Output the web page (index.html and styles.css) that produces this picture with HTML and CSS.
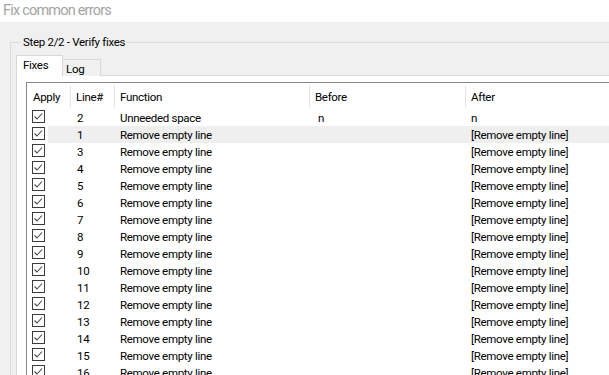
FILE: index.html
```html
<!DOCTYPE html>
<html lang="en">

<head>
    <meta charset="UTF-8">
    <title>Fix common errors</title>
    <link rel="stylesheet" href="styles.css">
</head>

<body>
    <!-- Window title -->
    <div class="title">Fix common errors</div>

    <fieldset class="group">
        <legend>Step 2/2 - Verify fixes</legend>

        <!-- Tabs -->
        <div class="tabs">
            <div class="tab active">Fixes</div>
            <div class="tab">Log</div>
        </div>

        <div class="tab-page">
            <div class="list">
                <div class="list-head">
                    <div class="col-apply">Apply</div>
                    <div class="col-line">Line#</div>
                    <div class="col-func">Function</div>
                    <div class="col-before">Before</div>
                    <div class="col-after">After</div>
                </div>

                <div class="row">
                    <div class="col-apply"><svg class="cb" viewBox="0 0 13 13"><rect x=".5" y=".5" width="12" height="12"/><path d="M2.5 6.5l2.5 2.5 5-5.5"/></svg></div>
                    <div class="col-line">2</div>
                    <div class="col-func">Unneeded space</div>
                    <div class="col-before">n</div>
                    <div class="col-after">n</div>
                </div>
                <div class="row hover">
                    <div class="col-apply"><svg class="cb" viewBox="0 0 13 13"><rect x=".5" y=".5" width="12" height="12"/><path d="M2.5 6.5l2.5 2.5 5-5.5"/></svg></div>
                    <div class="col-line">1</div>
                    <div class="col-func">Remove empty line</div>
                    <div class="col-before"></div>
                    <div class="col-after">[Remove empty line]</div>
                </div>
                <div class="row">
                    <div class="col-apply"><svg class="cb" viewBox="0 0 13 13"><rect x=".5" y=".5" width="12" height="12"/><path d="M2.5 6.5l2.5 2.5 5-5.5"/></svg></div>
                    <div class="col-line">3</div>
                    <div class="col-func">Remove empty line</div>
                    <div class="col-before"></div>
                    <div class="col-after">[Remove empty line]</div>
                </div>
                <div class="row">
                    <div class="col-apply"><svg class="cb" viewBox="0 0 13 13"><rect x=".5" y=".5" width="12" height="12"/><path d="M2.5 6.5l2.5 2.5 5-5.5"/></svg></div>
                    <div class="col-line">4</div>
                    <div class="col-func">Remove empty line</div>
                    <div class="col-before"></div>
                    <div class="col-after">[Remove empty line]</div>
                </div>
                <div class="row">
                    <div class="col-apply"><svg class="cb" viewBox="0 0 13 13"><rect x=".5" y=".5" width="12" height="12"/><path d="M2.5 6.5l2.5 2.5 5-5.5"/></svg></div>
                    <div class="col-line">5</div>
                    <div class="col-func">Remove empty line</div>
                    <div class="col-before"></div>
                    <div class="col-after">[Remove empty line]</div>
                </div>
                <div class="row">
                    <div class="col-apply"><svg class="cb" viewBox="0 0 13 13"><rect x=".5" y=".5" width="12" height="12"/><path d="M2.5 6.5l2.5 2.5 5-5.5"/></svg></div>
                    <div class="col-line">6</div>
                    <div class="col-func">Remove empty line</div>
                    <div class="col-before"></div>
                    <div class="col-after">[Remove empty line]</div>
                </div>
                <div class="row">
                    <div class="col-apply"><svg class="cb" viewBox="0 0 13 13"><rect x=".5" y=".5" width="12" height="12"/><path d="M2.5 6.5l2.5 2.5 5-5.5"/></svg></div>
                    <div class="col-line">7</div>
                    <div class="col-func">Remove empty line</div>
                    <div class="col-before"></div>
                    <div class="col-after">[Remove empty line]</div>
                </div>
                <div class="row">
                    <div class="col-apply"><svg class="cb" viewBox="0 0 13 13"><rect x=".5" y=".5" width="12" height="12"/><path d="M2.5 6.5l2.5 2.5 5-5.5"/></svg></div>
                    <div class="col-line">8</div>
                    <div class="col-func">Remove empty line</div>
                    <div class="col-before"></div>
                    <div class="col-after">[Remove empty line]</div>
                </div>
                <div class="row">
                    <div class="col-apply"><svg class="cb" viewBox="0 0 13 13"><rect x=".5" y=".5" width="12" height="12"/><path d="M2.5 6.5l2.5 2.5 5-5.5"/></svg></div>
                    <div class="col-line">9</div>
                    <div class="col-func">Remove empty line</div>
                    <div class="col-before"></div>
                    <div class="col-after">[Remove empty line]</div>
                </div>
                <div class="row">
                    <div class="col-apply"><svg class="cb" viewBox="0 0 13 13"><rect x=".5" y=".5" width="12" height="12"/><path d="M2.5 6.5l2.5 2.5 5-5.5"/></svg></div>
                    <div class="col-line">10</div>
                    <div class="col-func">Remove empty line</div>
                    <div class="col-before"></div>
                    <div class="col-after">[Remove empty line]</div>
                </div>
                <div class="row">
                    <div class="col-apply"><svg class="cb" viewBox="0 0 13 13"><rect x=".5" y=".5" width="12" height="12"/><path d="M2.5 6.5l2.5 2.5 5-5.5"/></svg></div>
                    <div class="col-line">11</div>
                    <div class="col-func">Remove empty line</div>
                    <div class="col-before"></div>
                    <div class="col-after">[Remove empty line]</div>
                </div>
                <div class="row">
                    <div class="col-apply"><svg class="cb" viewBox="0 0 13 13"><rect x=".5" y=".5" width="12" height="12"/><path d="M2.5 6.5l2.5 2.5 5-5.5"/></svg></div>
                    <div class="col-line">12</div>
                    <div class="col-func">Remove empty line</div>
                    <div class="col-before"></div>
                    <div class="col-after">[Remove empty line]</div>
                </div>
                <div class="row">
                    <div class="col-apply"><svg class="cb" viewBox="0 0 13 13"><rect x=".5" y=".5" width="12" height="12"/><path d="M2.5 6.5l2.5 2.5 5-5.5"/></svg></div>
                    <div class="col-line">13</div>
                    <div class="col-func">Remove empty line</div>
                    <div class="col-before"></div>
                    <div class="col-after">[Remove empty line]</div>
                </div>
                <div class="row">
                    <div class="col-apply"><svg class="cb" viewBox="0 0 13 13"><rect x=".5" y=".5" width="12" height="12"/><path d="M2.5 6.5l2.5 2.5 5-5.5"/></svg></div>
                    <div class="col-line">14</div>
                    <div class="col-func">Remove empty line</div>
                    <div class="col-before"></div>
                    <div class="col-after">[Remove empty line]</div>
                </div>
                <div class="row">
                    <div class="col-apply"><svg class="cb" viewBox="0 0 13 13"><rect x=".5" y=".5" width="12" height="12"/><path d="M2.5 6.5l2.5 2.5 5-5.5"/></svg></div>
                    <div class="col-line">15</div>
                    <div class="col-func">Remove empty line</div>
                    <div class="col-before"></div>
                    <div class="col-after">[Remove empty line]</div>
                </div>
                <div class="row">
                    <div class="col-apply"><svg class="cb" viewBox="0 0 13 13"><rect x=".5" y=".5" width="12" height="12"/><path d="M2.5 6.5l2.5 2.5 5-5.5"/></svg></div>
                    <div class="col-line">16</div>
                    <div class="col-func">Remove empty line</div>
                    <div class="col-before"></div>
                    <div class="col-after">[Remove empty line]</div>
                </div>
            </div>
        </div>
    </fieldset>
</body>

</html>
```

FILE: styles.css
```css
/* General */
body {
    margin: 0;
    background-color: #f0f0f0;
    font-family: 'Roboto', 'Liberation Sans', sans-serif;
    font-size: 11.5px;
    letter-spacing: -0.3px;
    color: #000;
    overflow: hidden;
    height: 375px;
}

/* Window title */
.title {
    height: 22px;
    background-color: #fff;
    color: #a3a3a3;
    font-size: 14.5px;
    letter-spacing: -0.8px;
    line-height: 22px;
    padding-left: 3px;
}

/* Group box */
.group {
    margin: 13px -20px 0 10px;
    padding: 5px 0 0 5px;
    border: 1px solid #dcdcdc;
    border-right: none;
    border-bottom: none;
    min-width: 0;
}

.group legend {
    padding: 0 2px;
    margin-left: 5px;
    line-height: 15px;
}

/* Tabs */
.tabs {
    display: flex;
    align-items: flex-end;
    height: 21px;
    position: relative;
    z-index: 1;
    margin-bottom: -1px;
}

.tab {
    height: 14px;
    padding: 2px 0 0 3px;
    line-height: 14px;
    width: 34px;
    border: 1px solid #d9d9d9;
    border-bottom: none;
    border-left: none;
    background-color: #f0f0f0;
}

.tab.active {
    height: 19px;
    padding: 1px 0 0 6px;
    line-height: 16px;
    width: 39px;
    border-left: 1px solid #d9d9d9;
    background-color: #fff;
}

.tab-page {
    background-color: #fff;
    border: 1px solid #d9d9d9;
    border-right: none;
    padding: 6px 0 0 9px;
    height: 400px;
}

/* List view */
.list {
    border: 1px solid #828790;
    border-right: none;
    background-color: #fff;
}

.list-head,
.row {
    display: grid;
    grid-template-columns: 44px 44px 195px 156px 1fr;
}

.list-head {
    height: 26px;
}

.list-head > div {
    padding: 3px 0 0 5px;
    margin: 2px 0 1px;
    line-height: 18px;
    border-right: 1px solid #e5e5e5;
}

.list-head .col-apply {
    padding-left: 6px;
}

.row {
    height: 17px;
    align-items: start;
}

.row > div {
    padding-left: 5px;
    line-height: 19px;
    white-space: nowrap;
}

.row .col-line {
    padding-left: 6px;
}

.row .col-before {
    padding-left: 8px;
}

.row.hover {
    background: linear-gradient(to right, transparent 21px, #efefef 21px);
}

/* Checkbox */
.cb {
    display: block;
    width: 13px;
    height: 13px;
    margin-top: 1px;
}

.cb rect {
    fill: #fff;
    stroke: #3c3c3c;
}

.cb path {
    fill: none;
    stroke: #4a4a4a;
    stroke-width: 1.1;
}
```
